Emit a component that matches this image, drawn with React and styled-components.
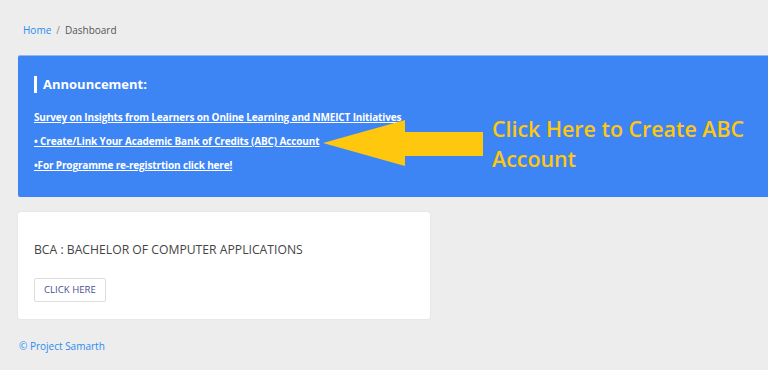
import styled, { createGlobalStyle } from "styled-components";

const GlobalStyle = createGlobalStyle`
  body {
    margin: 0;
    background: #ededed;
    font-family: "Open Sans", "Noto Sans", sans-serif;
    overflow: hidden;
  }
`;

const Page = styled.div`
  padding: 0 0 0 18px;
`;

const Breadcrumb = styled.nav`
  display: flex;
  align-items: center;
  gap: 5px;
  height: 20px;
  padding: 20px 0 15px 5px;
  font-size: 10px;
  color: #555;
`;

const Crumb = styled.a`
  color: ${(p) => (p.$active ? "#555" : "#2a8bf2")};
  text-decoration: none;
`;

const Sep = styled.span`
  color: #888;
`;

const Panel = styled.section`
  position: relative;
  background: #3d84f5;
  border-top: 1px solid #8fb6f5;
  border-radius: 2px 0 0 2px;
  height: 142px;
  padding: 20px 16px 0;
  box-sizing: border-box;
`;

const PanelTitle = styled.h3`
  margin: 0 0 16px;
  padding-left: 6px;
  border-left: 3px solid #fff;
  color: #fff;
  font-size: 13px;
  font-weight: 700;
  line-height: 17px;
`;

const LinkList = styled.div`
  display: flex;
  flex-direction: column;
  gap: 8px;
`;

const NoticeLink = styled.a`
  color: #fff;
  font-size: 10px;
  letter-spacing: -0.15px;
  font-weight: 700;
  line-height: 16px;
  text-decoration: underline;
  align-self: flex-start;
`;

const Callout = styled.div`
  position: absolute;
  left: 305px;
  top: 58px;
  display: flex;
  gap: 9px;
`;

const Arrow = styled.svg`
  flex: none;
  margin-top: 6px;
`;

const CalloutText = styled.div`
  width: 270px;
  color: #ffc70e;
  font-size: 21.4px;
  font-weight: 600;
  line-height: 30px;
`;

const Card = styled.div`
  width: 412px;
  margin-top: 15px;
  background: #fff;
  border-radius: 3px;
  box-shadow: 0 0 2px rgba(0, 0, 0, 0.08);
  padding: 29px 16px 20px;
  box-sizing: border-box;
  height: 107px;
`;

const CardTitle = styled.div`
  color: #444;
  font-size: 12.2px;
  line-height: 18px;
  margin-bottom: 17px;
`;

const Button = styled.button`
  font-family: inherit;
  font-size: 9.6px;
  color: #4a4f8f;
  background: #fff;
  border: 1px solid #ddd;
  border-radius: 2px;
  padding: 0 9px;
  height: 24px;
`;

const Footer = styled.footer`
  padding: 20px 0 0 1px;
  font-size: 10px;
  color: #2a8bf2;
`;

export default function App() {
  return (
    <>
      <GlobalStyle />
      <Page>
        <Breadcrumb>
          <Crumb href="#">Home</Crumb>
          <Sep>/</Sep>
          <Crumb $active>Dashboard</Crumb>
        </Breadcrumb>
        <Panel>
          <PanelTitle>Announcement:</PanelTitle>
          <LinkList>
            <NoticeLink href="#">
              Survey on Insights from Learners on Online Learning and NMEICT Initiatives
            </NoticeLink>
            <NoticeLink href="#">
              • Create/Link Your Academic Bank of Credits (ABC) Account
            </NoticeLink>
            <NoticeLink href="#">•For Programme re-registrtion click here!</NoticeLink>
          </LinkList>
          <Callout>
            <Arrow width="160" height="46" viewBox="0 0 160 46">
              <polygon
                points="0,23 82,0 82,12 160,12 160,36 82,36 82,46"
                fill="#ffc70e"
              />
            </Arrow>
            <CalloutText>Click Here to Create ABC Account</CalloutText>
          </Callout>
        </Panel>
        <Card>
          <CardTitle>BCA : BACHELOR OF COMPUTER APPLICATIONS</CardTitle>
          <Button>CLICK HERE</Button>
        </Card>
        <Footer>© Project Samarth</Footer>
      </Page>
    </>
  );
}
